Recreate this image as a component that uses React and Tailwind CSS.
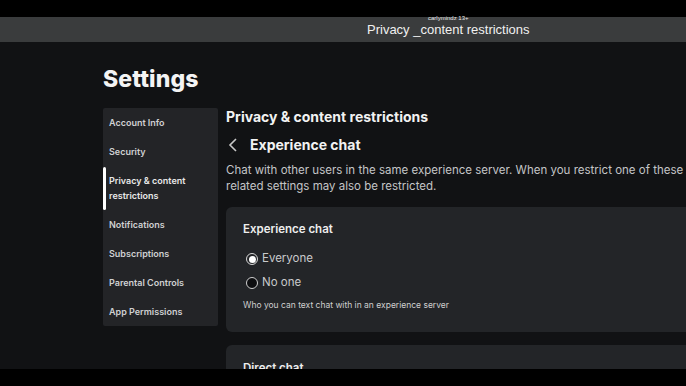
import React from "react";

const font = { fontFamily: "Inter, 'Open Sans', Arial, sans-serif" };

function Radio({ checked, label }) {
  return (
    <div className="flex items-center gap-[4px] h-[16px] pl-[3px]">
      {checked ? (
        <span className="w-[12px] h-[12px] rounded-full border-[1.5px] border-[#d8d8d8] flex items-center justify-center">
          <span className="w-[7px] h-[7px] rounded-full bg-white" />
        </span>
      ) : (
        <span className="w-[12px] h-[12px] rounded-full border-[1.5px] border-[#cfcfcf] bg-[#0d0e10]" />
      )}
      <span className="text-[11.5px] text-[#c9cacc]">{label}</span>
    </div>
  );
}

export default function App() {
  const items = [
    "Account Info",
    "Security",
    null,
    "Notifications",
    "Subscriptions",
    "Parental Controls",
    "App Permissions",
  ];
  return (
    <div className="w-[686px] h-[386px] bg-[#111214] flex flex-col overflow-hidden" style={font}>
      <div className="h-[17px] bg-black shrink-0" />
      <div className="h-[25px] bg-[#3a3c3d] shrink-0 relative">
        <div
          className="absolute left-[428px] top-[-2px] text-[6px] text-[#e6e6e6] leading-none"
          style={{ fontFamily: "'Liberation Sans', Arial, sans-serif" }}
        >
          carlymindz 13+
        </div>
        <div
          className="absolute left-[367px] top-[5px] text-[13px] leading-[16px] text-[#f0f0f0]"
          style={{ fontFamily: "'Liberation Sans', Arial, sans-serif" }}
        >
          Privacy _content restrictions
        </div>
      </div>
      <div className="h-[327px] shrink-0 overflow-hidden pl-[103px] pt-[22px]">
        <h1 className="text-[23px] font-extrabold text-[#f4f4f4] leading-[30px] tracking-[0.1px]">Settings</h1>
        <div className="flex gap-[8px] mt-[14px]">
          <div className="w-[115px] h-[218px] bg-[#232427] rounded-[2px] shrink-0">
            {items.map((it, i) =>
              it === null ? (
                <div key={i} className="relative pl-[6px] pt-[7px] pb-[7px]">
                  <div className="absolute left-0 top-[1px] bottom-[0px] w-[2.5px] bg-white rounded-sm" />
                  <div className="text-[9px] font-semibold text-[#e8e8e8] leading-[15px]">
                    Privacy &amp; content
                    <br />
                    restrictions
                  </div>
                </div>
              ) : (
                <div key={i} className="pl-[6px] h-[29px] flex items-center text-[9px] font-semibold text-[#cfd0d2]">
                  {it}
                </div>
              )
            )}
          </div>
          <div className="flex-1 min-w-0">
            <div className="text-[14px] font-bold text-[#f2f2f2] leading-[18px] whitespace-nowrap">
              Privacy &amp; content restrictions
            </div>
            <div className="flex items-center mt-[10px] h-[18px]">
              <svg width="10" height="16" viewBox="0 0 10 16" className="ml-[2px]">
                <path d="M8 2 L2 8 L8 14" fill="none" stroke="#c8c8c8" strokeWidth="1.6" />
              </svg>
              <span className="ml-[12px] text-[14px] font-bold text-[#f2f2f2] leading-[18px] whitespace-nowrap">
                Experience chat
              </span>
            </div>
            <div className="mt-[8px] text-[11.5px] leading-[16px] text-[#c4c5c7] w-[540px]">
              Chat with other users in the same experience server. When you restrict one of these settings,
              related settings may also be restricted.
            </div>
            <div className="mt-[13px] w-[500px] h-[125px] bg-[#232528] rounded-[6px] pl-[17px] pt-[14px]">
              <div className="text-[11.5px] font-semibold text-[#eeeeee] leading-[16px]">Experience chat</div>
              <div className="mt-[14px] flex flex-col gap-[8px]">
                <Radio checked label="Everyone" />
                <Radio label="No one" />
              </div>
              <div className="mt-[8px] text-[8.5px] text-[#d0d0d0] leading-[12px]">
                Who you can text chat with in an experience server
              </div>
            </div>
            <div className="mt-[13px] w-[500px] h-[80px] bg-[#232528] rounded-[6px] pl-[17px] pt-[15px]">
              <div className="text-[11.5px] font-semibold text-[#eeeeee] leading-[16px]">Direct chat</div>
            </div>
          </div>
        </div>
      </div>
      <div className="flex-1 bg-black" />
    </div>
  );
}
